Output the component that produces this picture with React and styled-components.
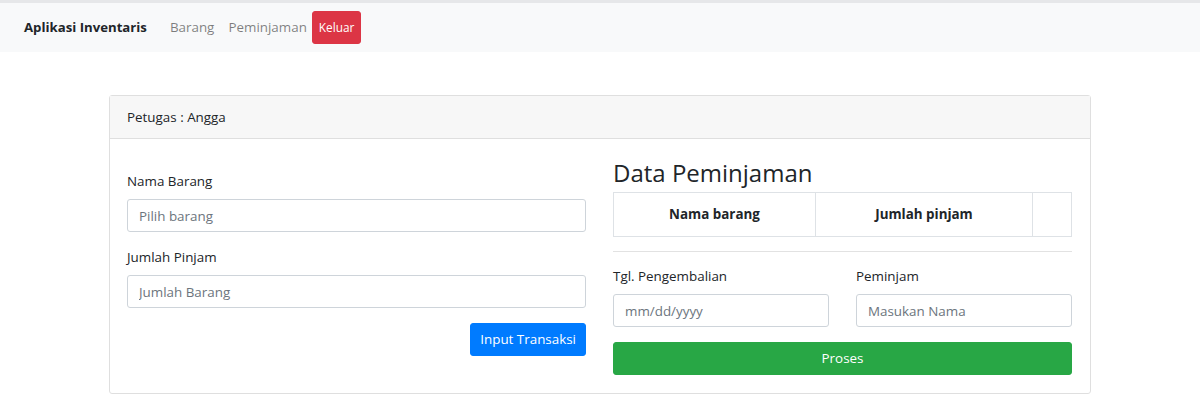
import React from 'react'
import styled, { createGlobalStyle } from 'styled-components'

const GlobalStyle = createGlobalStyle`
  * { box-sizing: border-box; }
  body {
    margin: 0;
    background: #fff;
    font-family: 'Open Sans', 'Noto Sans', sans-serif;
    font-size: 13.4px;
    line-height: 21px;
    color: #212529;
    border-top: 3px solid #e6e7e9;
  }
`

const Navbar = styled.nav`
  background: #f8f9fa;
  height: 49px;
  display: flex;
  align-items: center;
  padding: 0 24px;
`

const Brand = styled.span`
  font-weight: 700;
  font-size: 13.2px;
  color: #212529;
  margin-right: 16px;
`

const NavLink = styled.a`
  color: rgba(0, 0, 0, 0.5);
  padding: 0 7px;
  text-decoration: none;
`

const DangerButton = styled.button`
  background: #dc3545;
  color: #fff;
  border: 1px solid #dc3545;
  border-radius: 3px;
  font: inherit;
  font-size: 11.8px;
  height: 33px;
  padding: 0 6px;
  margin-left: -2px;
`

const Card = styled.div`
  width: 982px;
  margin: 43px auto 0;
  border: 1px solid #dfdfdf;
  border-radius: 3px;
`

const CardHeader = styled.div`
  background: #f7f7f7;
  border-bottom: 1px solid #dfdfdf;
  height: 43px;
  display: flex;
  align-items: center;
  padding: 0 17px;
`

const CardBody = styled.div`
  display: grid;
  grid-template-columns: 459px 459px;
  column-gap: 27px;
  padding: 19px 18px 18px 17px;
`

const Column = styled.div`
  display: flex;
  flex-direction: column;
`

const Label = styled.label`
  display: block;
  margin-bottom: 7px;
`

const Input = styled.input`
  width: 100%;
  height: 33px;
  border: 1px solid #ced4da;
  border-radius: 3px;
  padding: 0 11px;
  font: inherit;
  color: #495057;
  &::placeholder { color: #6c757d; }
`

const Group = styled.div`
  margin-bottom: 15px;
  margin-top: ${p => p.$top || 0}px;
`

const PrimaryButton = styled.button`
  align-self: flex-end;
  background: #007bff;
  color: #fff;
  border: 1px solid #007bff;
  border-radius: 3px;
  font: inherit;
  height: 33px;
  padding: 0 9px;
`

const Heading = styled.h3`
  font-size: 24px;
  font-weight: 500;
  margin: 0 0 5px;
  line-height: 29px;
`

const Table = styled.table`
  width: 100%;
  border-collapse: collapse;
  th {
    border: 1px solid #dee2e6;
    height: 44px;
    padding: 0;
    font-weight: 700;
    text-align: center;
  }
`

const Rule = styled.hr`
  border: 0;
  border-top: 1px solid #e2e2e2;
  margin: 14px 0 14px;
`

const Row = styled.div`
  display: grid;
  grid-template-columns: 1fr 1fr;
  column-gap: 27px;
`

const SuccessButton = styled.button`
  width: 100%;
  background: #28a745;
  color: #fff;
  border: 1px solid #28a745;
  border-radius: 3px;
  font: inherit;
  height: 33px;
`

export default function App() {
  return (
    <>
      <GlobalStyle />
      <Navbar>
        <Brand>Aplikasi Inventaris</Brand>
        <NavLink>Barang</NavLink>
        <NavLink>Peminjaman</NavLink>
        <DangerButton>Keluar</DangerButton>
      </Navbar>
      <Card>
        <CardHeader>Petugas : Angga</CardHeader>
        <CardBody>
          <Column>
            <Group $top={13}>
              <Label>Nama Barang</Label>
              <Input placeholder="Pilih barang" />
            </Group>
            <Group>
              <Label>Jumlah Pinjam</Label>
              <Input placeholder="Jumlah Barang" />
            </Group>
            <PrimaryButton>Input Transaksi</PrimaryButton>
          </Column>
          <Column>
            <Heading>Data Peminjaman</Heading>
            <Table>
              <thead>
                <tr>
                  <th style={{ width: 202 }}>Nama barang</th>
                  <th style={{ width: 217 }}>Jumlah pinjam</th>
                  <th></th>
                </tr>
              </thead>
            </Table>
            <Rule />
            <Row>
              <Group>
                <Label>Tgl. Pengembalian</Label>
                <Input placeholder="mm/dd/yyyy" />
              </Group>
              <Group>
                <Label>Peminjam</Label>
                <Input placeholder="Masukan Nama" />
              </Group>
            </Row>
            <SuccessButton>Proses</SuccessButton>
          </Column>
        </CardBody>
      </Card>
    </>
  )
}
